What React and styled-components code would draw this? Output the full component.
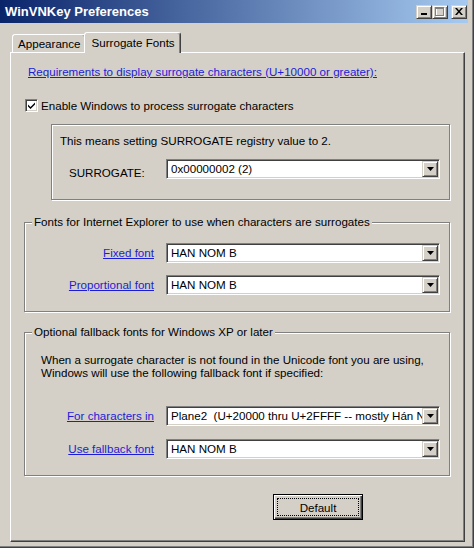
import styled, { createGlobalStyle } from "styled-components";

const GlobalStyle = createGlobalStyle`
  html, body {
    margin: 0;
    padding: 0;
    background: #d4d0c8;
  }

  body {
    font-family: "Liberation Sans", Arial, sans-serif;
    font-size: 11.6px;
    color: #000;
  }

  * {
    box-sizing: border-box;
  }
`;

const Window = styled.div`
  width: 474px;
  height: 548px;
  display: flex;
  flex-direction: column;
  background: #d4d0c8;
  padding: 0 5px 5px 0;
  border-right: 1px solid #404040;
  border-bottom: 1px solid #404040;
  box-shadow: inset -1px -1px 0 #808080;
`;

const TitleBar = styled.div`
  flex: none;
  height: 23px;
  display: flex;
  align-items: center;
  padding: 0 1px 0 5px;
  background: linear-gradient(to right, #0a246a, #a6caf0);
  color: #fff;
  font-weight: bold;
  font-size: 13px;
`;

const Title = styled.span`
  flex: 1;
`;

const CaptionButton = styled.span`
  width: 16px;
  height: 14px;
  margin-left: ${(props) => props.$gap || 0}px;
  display: flex;
  align-items: center;
  justify-content: center;
  background: #d4d0c8;
  border: 1px solid;
  border-color: #d4d0c8 #404040 #404040 #d4d0c8;
  box-shadow: inset 1px 1px 0 #fff, inset -1px -1px 0 #808080;
`;

const Body = styled.div`
  flex: 1;
  display: flex;
  flex-direction: column;
  padding: 9px 3px 0 10px;
`;

const TabStrip = styled.div`
  flex: none;
  height: 20px;
  display: flex;
  align-items: flex-end;
  padding-left: 2px;
`;

const Tab = styled.div`
  position: relative;
  z-index: ${(props) => (props.$active ? 1 : 0)};
  height: ${(props) => (props.$active ? 21 : 18)}px;
  margin-bottom: ${(props) => (props.$active ? -1 : 0)}px;
  margin-left: ${(props) => (props.$active ? -2 : 0)}px;
  padding: ${(props) => (props.$active ? "0 5px 2px 7px" : "0 4px 0 5px")};
  display: flex;
  align-items: center;
  background: #d4d0c8;
  border: 1px solid;
  border-bottom: none;
  border-color: #fff #404040 transparent #fff;
  border-radius: 3px 3px 0 0;
  box-shadow: inset -1px 0 0 #808080;
  white-space: nowrap;
`;

const Panel = styled.div`
  flex: 1;
  display: flex;
  flex-direction: column;
  align-items: flex-start;
  padding: 0 14px 0 0;
  border: 1px solid;
  border-color: #fff #404040 #404040 #fff;
  box-shadow: inset -1px -1px 0 #808080;
`;

const Link = styled.a`
  color: #1c1cd6;
  text-decoration: underline;
  line-height: 14px;
  cursor: pointer;
  white-space: nowrap;
`;

const TopLink = styled(Link)`
  margin: 12px 0 0 17px;
`;

const CheckRow = styled.label`
  display: flex;
  align-items: center;
  height: 14px;
  margin: 19px 0 0 14px;
  gap: 3px;
`;

const CheckBox = styled.span`
  width: 13px;
  height: 13px;
  display: flex;
  align-items: center;
  justify-content: center;
  background: #fff;
  border: 1px solid;
  border-color: #808080 #fff #fff #808080;
  box-shadow: inset 1px 1px 0 #404040, inset -1px -1px 0 #d4d0c8;
`;

const Group = styled.fieldset`
  align-self: stretch;
  margin: ${(props) => props.$top}px 0 0 ${(props) => props.$left}px;
  padding: ${(props) => props.$pad};
  min-width: 0;
  display: flex;
  flex-direction: column;
  gap: ${(props) => props.$gap || 0}px;
  border: 1px solid #808080;
  box-shadow: inset 1px 1px 0 #fff, 1px 1px 0 #fff;
`;

const Legend = styled.legend`
  margin-left: -1px;
  padding: 0 2px;
  line-height: 14px;
  background: #d4d0c8;
`;

const Note = styled.p`
  margin: 0;
  line-height: ${(props) => props.$line || 14}px;
  padding-left: ${(props) => props.$indent || 0}px;
`;

const FieldRow = styled.div`
  display: grid;
  grid-template-columns: 1fr 274px;
  column-gap: 12px;
  margin-top: ${(props) => props.$top || 0}px;
`;

const FieldLabel = styled.div`
  align-self: ${(props) => (props.$drop ? "start" : "center")};
  padding-top: ${(props) => (props.$drop ? 7 : 0)}px;
  padding-left: ${(props) => props.$indent || 0}px;
  text-align: ${(props) => (props.$left ? "left" : "right")};
  line-height: 14px;
  white-space: nowrap;
`;

const Combo = styled.div`
  height: 20px;
  display: flex;
  padding: 1px;
  background: #fff;
  border: 1px solid;
  border-color: #808080 #fff #fff #808080;
  box-shadow: inset 1px 1px 0 #404040, inset -1px -1px 0 #d4d0c8;
`;

const ComboText = styled.div`
  flex: 1;
  min-width: 0;
  padding-left: 3px;
  line-height: 16px;
  white-space: pre;
  overflow: hidden;
`;

const DropButton = styled.span`
  flex: none;
  width: 16px;
  height: 16px;
  display: flex;
  align-items: center;
  justify-content: center;
  background: #d4d0c8;
  border: 1px solid;
  border-color: #d4d0c8 #404040 #404040 #d4d0c8;
  box-shadow: inset 1px 1px 0 #fff, inset -1px -1px 0 #808080;
`;

const PushButton = styled.button`
  width: 90px;
  height: 26px;
  margin: 18px 0 0 262px;
  padding: 3px;
  display: flex;
  font: inherit;
  color: #000;
  background: #d4d0c8;
  border: 1px solid #000;
  box-shadow: inset 1px 1px 0 #fff, inset -1px -1px 0 #404040,
    inset -2px -2px 0 #808080;
`;

const FocusRing = styled.span`
  flex: 1;
  display: flex;
  align-items: center;
  justify-content: center;
  border: 1px dotted #000;
`;

const Arrow = () => (
  <svg width="7" height="4" viewBox="0 0 7 4">
    <polygon points="0,0 7,0 3.5,4" fill="#000" />
  </svg>
);

const Dropdown = ({ value }) => (
  <Combo>
    <ComboText>{value}</ComboText>
    <DropButton>
      <Arrow />
    </DropButton>
  </Combo>
);

const MinimizeIcon = () => (
  <svg width="8" height="7" viewBox="0 0 8 7">
    <rect x="1" y="5" width="6" height="2" fill="#000" />
  </svg>
);

const MaximizeIcon = () => (
  <svg width="10" height="10" viewBox="0 0 10 10">
    <rect x="1.5" y="1.5" width="8" height="8" fill="none" stroke="#fff" />
    <rect x="0.5" y="0.5" width="8" height="8" fill="none" stroke="#808080" />
    <rect x="0" y="1" width="9" height="1" fill="#808080" />
  </svg>
);

const CloseIcon = () => (
  <svg width="8" height="7" viewBox="0 0 8 7">
    <path d="M0 0h2l2 2.5 2-2.5h2L5 3.5 8 7H6L4 4.5 2 7H0l3-3.5z" fill="#000" />
  </svg>
);

const CheckIcon = () => (
  <svg width="7" height="7" viewBox="0 0 7 7">
    <path d="M0 2.5l2.5 2.5L7 0.5v2L2.5 7 0 4.5z" fill="#000" />
  </svg>
);

export default function App() {
  return (
    <>
      <GlobalStyle />
      <Window>
        <TitleBar>
          <Title>WinVNKey Preferences</Title>
          <CaptionButton>
            <MinimizeIcon />
          </CaptionButton>
          <CaptionButton>
            <MaximizeIcon />
          </CaptionButton>
          <CaptionButton $gap={3}>
            <CloseIcon />
          </CaptionButton>
        </TitleBar>

        <Body>
          <TabStrip>
            <Tab>Appearance</Tab>
            <Tab $active>Surrogate Fonts</Tab>
          </TabStrip>

          <Panel>
            <TopLink>
              Requirements to display surrogate characters (U+10000 or greater):
            </TopLink>

            <CheckRow>
              <CheckBox>
                <CheckIcon />
              </CheckBox>
              Enable Windows to process surrogate characters
            </CheckRow>

            <Group $top={12} $left={40} $pad="9px 9px 19px 8px">
              <Note>This means setting SURROGATE registry value to 2.</Note>
              <FieldRow $top={11}>
                <FieldLabel $left $drop $indent={9}>
                  SURROGATE:
                </FieldLabel>
                <Dropdown value="0x00000002 (2)" />
              </FieldRow>
            </Group>

            <Group $top={15} $left={13} $gap={12} $pad="14px 9px 16px 8px">
              <Legend>Fonts for Internet Explorer to use when characters are surrogates</Legend>
              <FieldRow>
                <FieldLabel>
                  <Link>Fixed font</Link>
                </FieldLabel>
                <Dropdown value="HAN NOM B" />
              </FieldRow>
              <FieldRow>
                <FieldLabel>
                  <Link>Proportional font</Link>
                </FieldLabel>
                <Dropdown value="HAN NOM B" />
              </FieldRow>
            </Group>

            <Group $top={13} $left={13} $gap={13} $pad="14px 9px 16px 8px">
              <Legend>Optional fallback fonts for Windows XP or later</Legend>
              <Note $line={13} $indent={8}>
                When a surrogate character is not found in the Unicode font you are using,
                <br />
                Windows will use the following fallback font if specified:
              </Note>
              <FieldRow $top={14}>
                <FieldLabel>
                  <Link>For characters in</Link>
                </FieldLabel>
                <Dropdown value="Plane2  (U+20000 thru U+2FFFF -- mostly Hán Nôm)" />
              </FieldRow>
              <FieldRow>
                <FieldLabel>
                  <Link>Use fallback font</Link>
                </FieldLabel>
                <Dropdown value="HAN NOM B" />
              </FieldRow>
            </Group>

            <PushButton>
              <FocusRing>Default</FocusRing>
            </PushButton>
          </Panel>
        </Body>
      </Window>
    </>
  );
}
